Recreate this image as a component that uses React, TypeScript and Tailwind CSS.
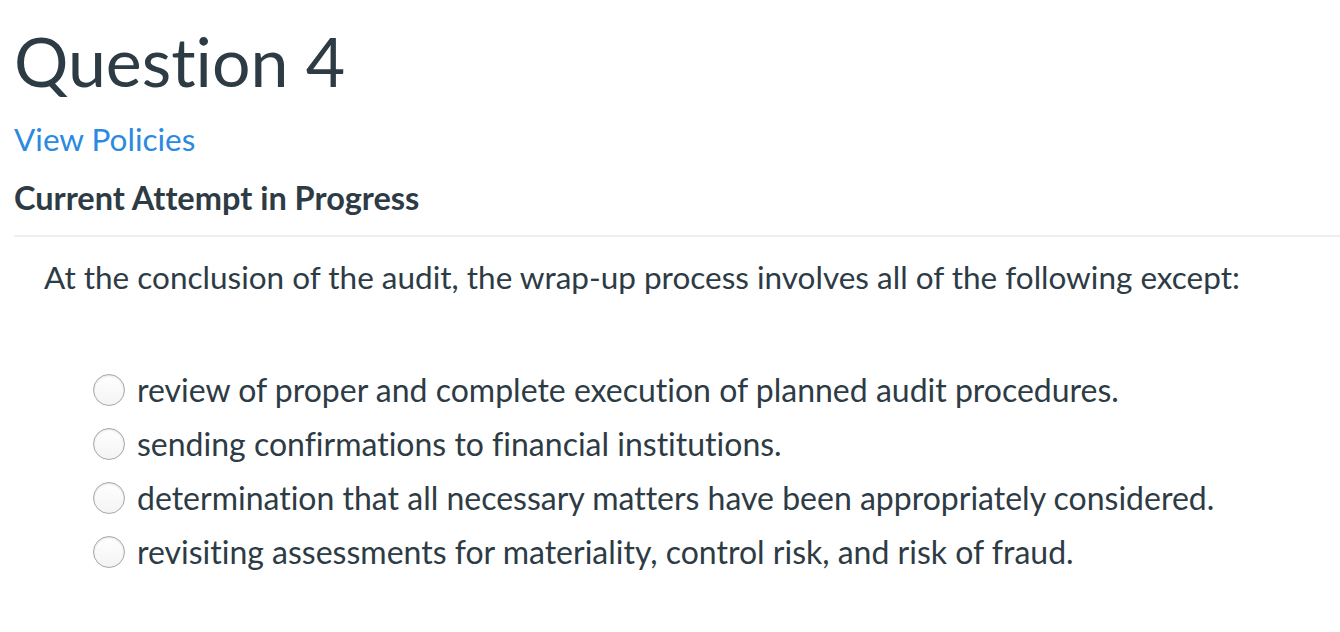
import React from 'react';

const answers = [
    'review of proper and complete execution of planned audit procedures.',
    'sending confirmations to financial institutions.',
    'determination that all necessary matters have been appropriately considered.',
    'revisiting assessments for materiality, control risk, and risk of fraud.',
];

const Radio: React.FC = () => (
    <span className="inline-block w-[32px] h-[32px] rounded-full border-[1.5px] border-[#a8a8a8] bg-gradient-to-b from-white to-[#f4f4f4] shadow-[inset_0_1px_2px_rgba(0,0,0,0.12)] shrink-0"/>
);

const App: React.FC = () => {
    return (
        <div className="w-[1340px] h-[632px] bg-white text-[#2d3b45] font-['Lato',sans-serif] [font-variant-ligatures:no-common-ligatures] overflow-hidden">
            <div className="pl-[14px] pt-[18px]">
                <h1 className="text-[68px] leading-[86px] font-normal">Question 4</h1>
                <a className="block mt-[15px] text-[31.5px] leading-[40px] text-[#2b8ae0]" href="#">View Policies</a>
                <p className="mt-[19px] text-[32.5px] leading-[40px] font-bold">Current Attempt in Progress</p>
                <div className="mt-[17px] h-[2px] bg-[#eeeeee]"/>
            </div>
            <div className="pl-[44px] pt-[20px]">
                <p className="text-[31.5px] leading-[40px]">At the conclusion of the audit, the wrap-up process involves all of the following except:</p>
                <ul className="mt-[66px] pl-[49px] flex flex-col">
                    {answers.map((a) => (
                        <li key={a} className="flex items-center gap-[12px] h-[54px]">
                            <Radio/>
                            <span className="text-[32px] leading-[40px]">{a}</span>
                        </li>
                    ))}
                </ul>
            </div>
        </div>
    );
};

export default App;
